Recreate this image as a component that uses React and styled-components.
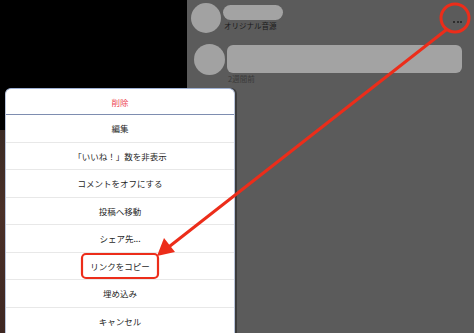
import React from "react";
import styled, { createGlobalStyle } from "styled-components";

const GlobalStyle = createGlobalStyle`
  html, body {
    margin: 0;
    padding: 0;
    background: #000;
  }
  body {
    font-family: "Noto Sans CJK JP", "Noto Sans", sans-serif;
  }
`;

const Screen = styled.div`
  position: relative;
  width: 474px;
  height: 333px;
  overflow: hidden;
  display: flex;
`;

const LeftSide = styled.div`
  width: 187px;
  display: flex;
  flex-direction: column;
`;

const BlackArea = styled.div`
  height: 130px;
  background: #000;
`;

const PhotoArea = styled.div`
  flex: 1;
  background: linear-gradient(180deg, #3a2a24 0%, #4a3028 40%, #3e2722 100%);
`;

const Panel = styled.div`
  flex: 1;
  background: #5b5b5b;
  display: flex;
  flex-direction: column;
  gap: 11px;
  padding: 3px 12px 0 4px;
`;

const PostRow = styled.div`
  display: flex;
  align-items: flex-start;
  gap: 2px;
  padding-left: ${({ $indent }) => $indent || 0}px;
`;

const Avatar = styled.div`
  width: ${({ $size }) => $size}px;
  height: ${({ $size }) => $size}px;
  border-radius: 50%;
  background: #a2a2a2;
  flex-shrink: 0;
`;

const PostBody = styled.div`
  flex: 1;
  display: flex;
  flex-direction: column;
  padding-top: ${({ $top }) => $top || 0}px;
`;

const Pill = styled.div`
  width: ${({ $w }) => ($w ? `${$w}px` : "100%")};
  height: ${({ $h }) => $h}px;
  border-radius: ${({ $r }) => $r}px;
  background: #a3a3a3;
`;

const SmallText = styled.span`
  font-size: 7.5px;
  line-height: 10px;
  color: ${({ $dim }) => ($dim ? "#3a3a3a" : "#1a1a1a")};
  margin-top: 1px;
  padding-left: 1px;
`;

const HeaderLine = styled.div`
  display: flex;
  justify-content: space-between;
  align-items: flex-start;
  height: 15px;
`;

const Dots = styled.div`
  display: flex;
  gap: 1.5px;
  margin-top: 16px;
`;

const Dot = styled.span`
  width: 2px;
  height: 2px;
  border-radius: 50%;
  background: #1e1e1e;
`;

const Menu = styled.div`
  position: absolute;
  left: 5px;
  top: 88px;
  width: 228px;
  background: #fff;
  border-radius: 6px 6px 0 0;
  border-top: 1px solid #9fb1d4;
  border-left: 1px solid #b9c4da;
  border-right: 1px solid #b9c4da;
  box-shadow: 2px 0 0 #3c3c3c;
  display: flex;
  flex-direction: column;
`;

const MenuItem = styled.div`
  height: ${({ $first }) => ($first ? 26 : 27.5)}px;
  display: flex;
  align-items: center;
  justify-content: center;
  font-size: 8.5px;
  color: ${({ $danger }) => ($danger ? "#ed4956" : "#1f1f1f")};
  border-bottom: 1px solid ${({ $first }) => ($first ? "#7e8db0" : "#e8e8e8")};
  box-sizing: border-box;
`;

const Overlay = styled.svg`
  position: absolute;
  left: 0;
  top: 0;
  pointer-events: none;
`;

const items = [
  "編集",
  "「いいね！」数を非表示",
  "コメントをオフにする",
  "投稿へ移動",
  "シェア先...",
  "リンクをコピー",
  "埋め込み",
  "キャンセル",
];

export default function App() {
  return (
    <>
      <GlobalStyle />
      <Screen>
        <LeftSide>
          <BlackArea />
          <PhotoArea />
        </LeftSide>
        <Panel>
          <PostRow>
            <Avatar $size={30} />
            <PostBody $top={2}>
              <HeaderLine>
                <Pill $w={60} $h={15} $r={8} />
                <Dots>
                  <Dot />
                  <Dot />
                  <Dot />
                </Dots>
              </HeaderLine>
              <SmallText>オリジナル音源</SmallText>
            </PostBody>
          </PostRow>
          <PostRow $indent={3}>
            <Avatar $size={31} />
            <PostBody $top={1}>
              <Pill $h={28} $r={6} />
              <SmallText $dim>2週間前</SmallText>
            </PostBody>
          </PostRow>
        </Panel>

        <Menu>
          <MenuItem $first $danger>削除</MenuItem>
          {items.map((label) => (
            <MenuItem key={label}>{label}</MenuItem>
          ))}
        </Menu>

        <Overlay width="474" height="333" viewBox="0 0 474 333">
          <circle cx="455" cy="18" r="14" fill="none" stroke="#ec2d1a" strokeWidth="3" />
          <line x1="446" y1="30" x2="170" y2="246" stroke="#ec2d1a" strokeWidth="3" strokeLinecap="round" />
          <polygon points="157,256 164,238 175,252" fill="#ec2d1a" />
          <rect x="82" y="254" width="76" height="24" rx="4" fill="none" stroke="#ec2d1a" strokeWidth="2.2" />
        </Overlay>
      </Screen>
    </>
  );
}
